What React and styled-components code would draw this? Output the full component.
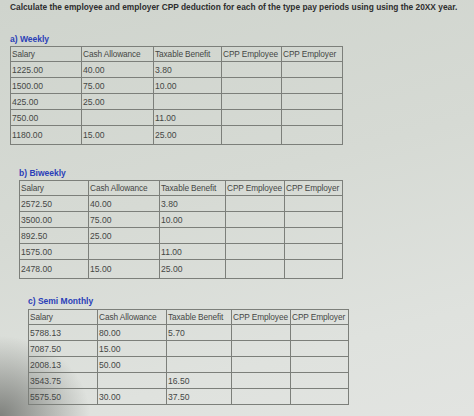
import React from 'react'
import styled, { createGlobalStyle } from 'styled-components'

const GlobalStyle = createGlobalStyle`
  html, body {
    margin: 0;
    padding: 0;
  }
  body {
    font-family: "Liberation Sans", Arial, sans-serif;
  }
`

const sections = [
  {
    label: 'a)  Weekly',
    indent: 10,
    top: 22,
    gap: 2,
    last: 19,
    widths: [71, 72, 68, 60, 61],
    rows: [
      ['1225.00', '40.00', '3.80'],
      ['1500.00', '75.00', '10.00'],
      ['425.00', '25.00', ''],
      ['750.00', '', '11.00'],
      ['1180.00', '15.00', '25.00'],
    ],
  },
  {
    label: 'b)  Biweekly',
    indent: 19,
    top: 23,
    gap: 2,
    last: 19,
    widths: [69, 71, 66, 59, 58],
    rows: [
      ['2572.50', '40.00', '3.80'],
      ['3500.00', '75.00', '10.00'],
      ['892.50', '25.00', ''],
      ['1575.00', '', '11.00'],
      ['2478.00', '15.00', '25.00'],
    ],
  },
  {
    label: 'c)  Semi Monthly',
    indent: 28,
    top: 17,
    gap: 3,
    last: 16,
    widths: [69, 69, 65, 59, 58],
    rows: [
      ['5788.13', '80.00', '5.70'],
      ['7087.50', '15.00', ''],
      ['2008.13', '50.00', ''],
      ['3543.75', '', '16.50'],
      ['5575.50', '30.00', '37.50'],
    ],
  },
]

const headers = ['Salary', 'Cash Allowance', 'Taxable Benefit', 'CPP Employee', 'CPP Employer']

const App = () => {
  return (
    <Page>
      <GlobalStyle />
      <Title>
        Calculate the employee and employer CPP deduction for each of the type pay periods using using the 20XX year.
      </Title>
      {sections.map((s) => (
        <Section key={s.label} indent={s.indent} top={s.top}>
          <Label gap={s.gap}>{s.label}</Label>
          <Grid w={s.widths.reduce((a, b) => a + b, 0)}>
            <colgroup>
              {s.widths.map((w, i) => (
                <col key={i} style={{ width: w }} />
              ))}
            </colgroup>
            <tbody>
              <Row h={15}>
                {headers.map((h, i) => (
                  <HeadCell key={h} strong={i === 2}>
                    {h}
                  </HeadCell>
                ))}
              </Row>
              {s.rows.map((r, ri) => (
                <Row key={ri} h={ri === s.rows.length - 1 ? s.last : 16}>
                  {r.map((v, ci) => (
                    <Cell key={ci} strong={ci === 2}>
                      {v}
                    </Cell>
                  ))}
                  <Cell />
                  <Cell />
                </Row>
              ))}
            </tbody>
          </Grid>
        </Section>
      ))}
    </Page>
  )
}

const Page = styled.div`
  width: 474px;
  height: 416px;
  overflow: hidden;
  box-sizing: border-box;
  padding: 2px 0 0 0;
  background:
    radial-gradient(ellipse 90px 80px at 0% 100%, rgba(95, 97, 93, 0.75), rgba(95, 97, 93, 0) 100%),
    linear-gradient(165deg, #cfd4cd 0%, #d6dad4 45%, #dfe2de 80%, #e2e4e1 100%);
  color: #3a3a3a;
`

const Title = styled.div`
  margin-left: 10px;
  font-size: 8.35px;
  font-weight: bold;
  color: #2e2e2e;
  white-space: nowrap;
`

const Section = styled.section`
  margin-left: ${(p) => p.indent}px;
  margin-top: ${(p) => p.top}px;
`

const Label = styled.div`
  font-size: 8.5px;
  font-weight: bold;
  color: #2b3fb8;
  margin-bottom: ${(p) => p.gap}px;
`

const Grid = styled.table`
  width: ${(p) => p.w}px;
  border-collapse: collapse;
  table-layout: fixed;
  border: 1px solid #6e716d;
`

const Row = styled.tr`
  height: ${(p) => p.h}px;
`

const Cell = styled.td`
  border: 1px solid #7c7f7a;
  border-left: ${(p) => (p.strong ? '1px solid #3e403d' : '1px solid #7c7f7a')};
  padding: 0 1px;
  font-size: 8.6px;
  color: #454745;
  vertical-align: middle;
  white-space: nowrap;
  overflow: hidden;
  line-height: 10px;
`

const HeadCell = styled(Cell)`
  font-size: 8.3px;
  letter-spacing: -0.1px;
`

export default App
